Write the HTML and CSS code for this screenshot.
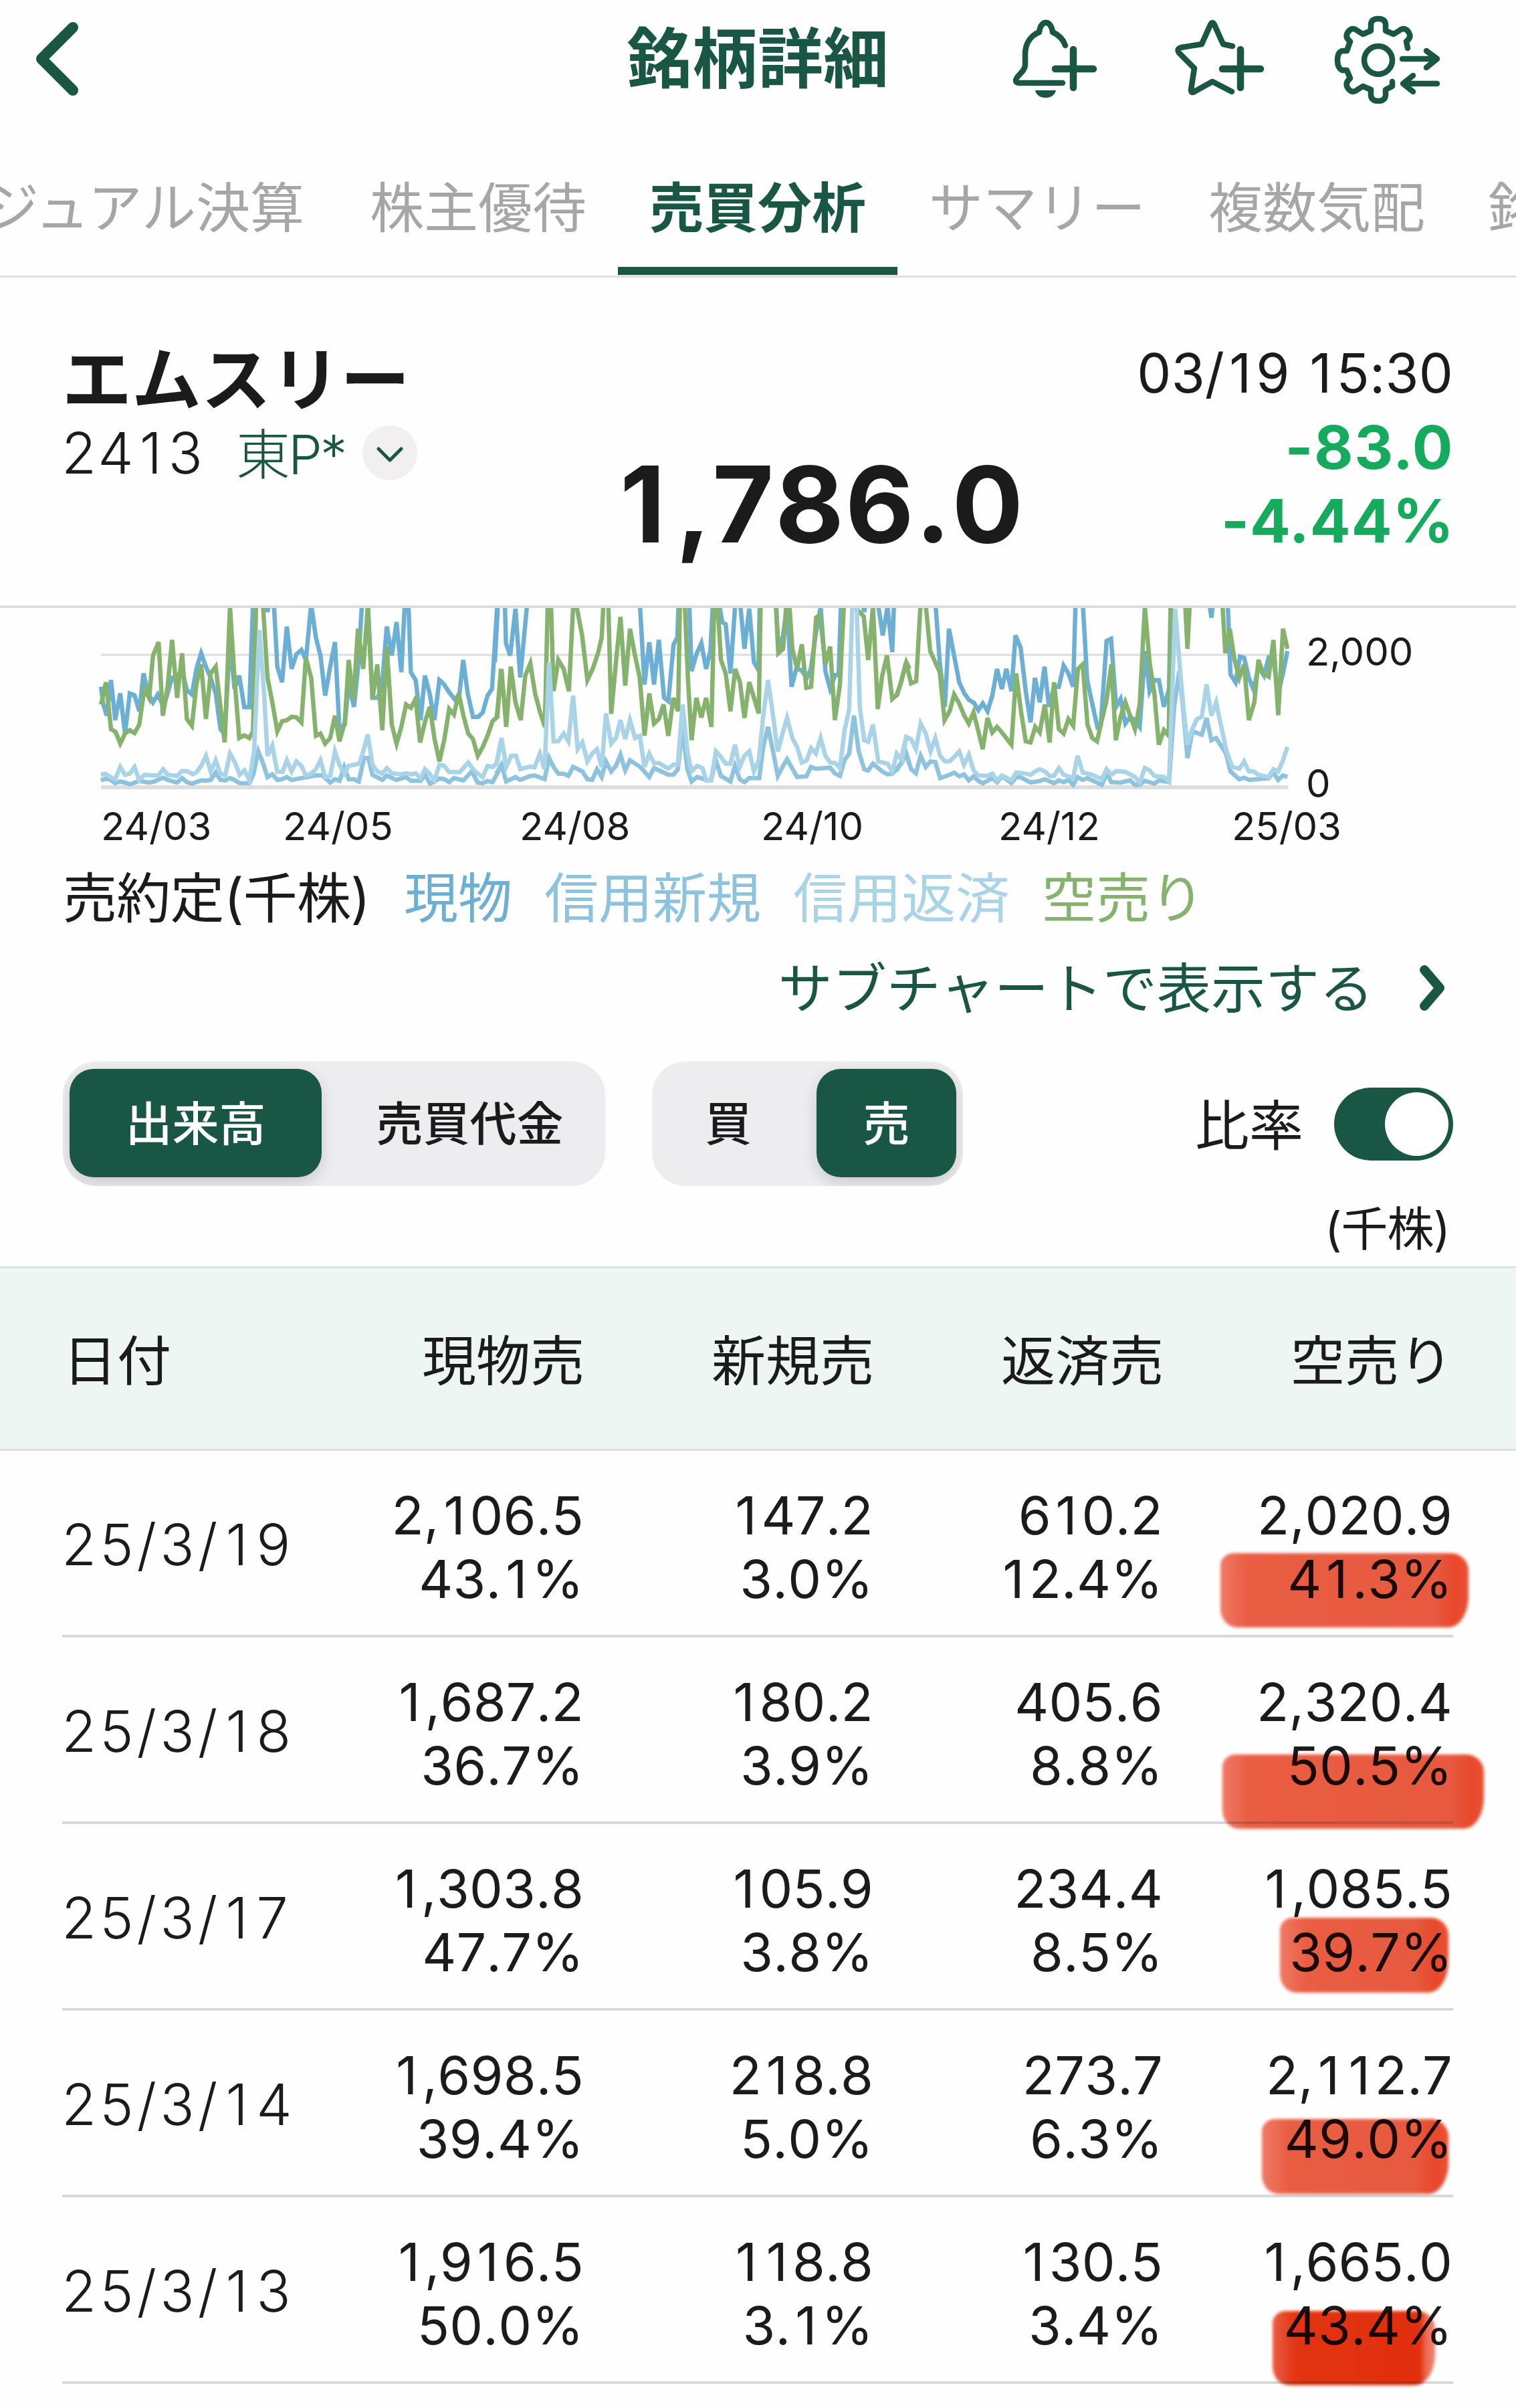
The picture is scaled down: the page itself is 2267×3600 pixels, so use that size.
FILE: index.html
```html
<!DOCTYPE html>
<html lang="ja">
<head>
  <meta charset="UTF-8">
  <meta name="viewport" content="width=device-width, initial-scale=1.0">
  <title>銘柄詳細</title>
  <link rel="stylesheet" href="styles.css">
</head>
<body>
  <header class="header">
    <svg class="header__back" viewBox="0 0 80 120"><path d="M66 13 L19 60 L66 107"/></svg>
    <h1 class="header__title">銘柄詳細</h1>
    <div class="header__actions">
      <svg class="icon icon--bell" viewBox="0 0 140 140">
        <path d="M84 53 C81 44 74 37 65 33 C63 14 47 14 45 33 C31 39 24 51 24 66 V82 C24 92 10 99 10 105 Q10 109 15 109 H80"/>
        <path class="icon__fill" d="M39 120 H70 C67 135 42 135 39 120 Z"/>
        <path class="icon__plus" d="M96 59 V116 M69 88 H126"/>
      </svg>
      <svg class="icon icon--star" viewBox="0 0 140 140">
        <path d="M87 54 L73 51 L60 22 Q57 16 54 22 L41 51 L10 56 Q3 58 7 64 L30 87 L25 119 Q25 125 30 122 L57 107 L86 122"/>
        <path class="icon__plus" d="M99 59 V116 M72 88 H129"/>
      </svg>
      <svg class="icon icon--gear" viewBox="0 0 170 140">
        <path d="M114 57 L112 47 Q120 41 116 34 Q110 24 101 31 L93 36 L81 31 V21 Q80 13 70 13 Q60 13 59 21 V31 L47 36 L39 31 Q30 24 24 34 Q20 41 28 47 L23 61 H16 Q9 63 9 75 Q9 87 16 90 H23 L28 102 Q20 109 24 116 Q30 126 39 119 L47 114 L59 119 V128 Q60 136 70 136 Q80 136 81 128 V119 L91 114 V107"/>
        <circle cx="70" cy="75" r="21"/>
        <path d="M106 73 H158 M142 61 L158 73 L142 86 M158 110 H108 M122 98 L107 110 L122 122"/>
      </svg>
    </div>
  </header>

  <nav class="tabs">
    <span class="tabs__item tabs__item--first">ビジュアル決算</span>
    <span class="tabs__item">株主優待</span>
    <span class="tabs__item tabs__item--active">売買分析</span>
    <span class="tabs__item">サマリー</span>
    <span class="tabs__item">複数気配</span>
    <span class="tabs__item">銘柄情報</span>
  </nav>

  <section class="quote">
    <div class="quote__stock">
      <h2 class="quote__name">エムスリー</h2>
      <div class="quote__code">
        <span class="quote__number num">2413</span>
        <span class="quote__market">東P*</span>
        <span class="quote__more"><svg viewBox="0 0 82 82"><path d="M24 35 L41 52 L58 35"/></svg></span>
      </div>
    </div>
    <p class="quote__price num">1,786.0</p>
    <div class="quote__change">
      <p class="quote__time num">03/19 15:30</p>
      <p class="quote__diff">-83.0</p>
      <p class="quote__diff quote__diff--rate">-4.44%</p>
    </div>
  </section>

  <svg class="chart" viewBox="0 0 2267 387">
    <path class="chart__grid" d="M151 70 H1926"/>
    <path class="chart__axis" d="M151 268 H1926"/>

    <!-- 現物 -->
    <g class="line line--spot">
      <polyline transform="translate(130 -19) scale(.3954 .3333)" points="53,410 62,490 75,540 91,380 107,560 126,440 144,620 162,440 180,448 198,520 214,350 232,440 250,480 268,445 290,500 322,370 341,370 358,330 378,425 397,445 414,330 432,260 450,320 468,370 487,440 505,600 521,625 541,200 558,420 576,360 595,502 614,502 628,40 668,-50 683,75 695,0 708,60 720,320 738,390 756,140 774,330 792,265 811,245 828,290 848,40 866,190 883,270 901,450 920,320 938,210 955,600 975,580 990,400 1010,500 1025,330 1040,40 1060,-20 1080,460 1098,460 1115,420 1134,140 1153,270 1171,120 1189,345 1202,40 1216,40 1225,345 1243,380 1262,560 1278,360 1296,440 1314,560 1333,380 1351,400 1370,435 1390,465 1408,450 1423,290 1440,440 1460,545 1480,545 1497,525 1515,450 1532,420 1552,40"/>
      <polyline transform="translate(740 -19) scale(.3954 .3333)" points="0,300 12,30 38,40 42,215 58,270 78,60 96,368 122,40 140,-60 540,-60 549,50 566,400 584,210 602,400 620,200 640,460 656,475 676,220 690,190 695,30 735,30 744,340 762,265 781,215 799,330 815,250 825,30 850,50 860,120 873,130 891,350 909,40 928,40 944,240 962,60 980,300 997,335 1003,-40 1060,-60 1072,240 1090,180 1105,50 1122,410 1140,330 1158,335 1180,370 1195,330 1213,180 1232,50 1250,340 1268,420 1287,358 1300,358 1310,0 1385,0 1397,75 1408,0 1448,30 1467,180 1485,50 1503,255 1510,20 1568,-60"/>
      <polyline transform="translate(1340 -19) scale(.5102 .3333)" points="20,-60 115,30 128,300 143,500 155,150 170,270 185,390 200,440 213,468 228,482 241,515 254,485 268,520 282,450 296,330 310,420 323,330 338,430 350,180 365,235 380,430 394,570 407,370 421,480 435,320 448,500 463,410 477,410 491,315 505,350 519,410 526,30 547,30 560,380 574,480 590,590 600,580 617,205 630,195 645,500 658,465 672,575 686,545 700,560 714,590 730,250 743,430 758,380 770,380 785,500 800,420 805,0 915,0 924,100 932,0 972,30 980,355 995,390 1008,275 1020,280 1034,370 1048,425 1062,320 1078,360 1092,280 1106,290 1120,440 1134,350 1147,250"/>
    </g>

    <!-- 空売り -->
    <g class="line line--short">
      <polyline transform="translate(130 -19) scale(.3954 .3333)" points="53,490 72,390 91,600 108,612 126,665 144,620 162,605 180,618 198,580 217,420 235,460 250,270 271,210 287,540 305,410 322,200 341,460 360,260 378,555 397,585 414,400 432,310 450,555 468,350 487,320 505,500 521,660 541,50 558,370 576,640 595,628 614,640 628,610 640,30 665,30 683,370 701,480 720,610 738,565 756,560 774,545 792,547 811,570 828,280 848,370 866,630 883,620 901,665 920,640 938,540 955,655 975,570 990,290 1008,470 1025,150 1045,330 1062,50 1080,465 1098,310 1117,605 1134,230 1153,580 1171,665 1189,590 1207,490 1225,505 1243,465 1260,660 1278,570 1297,500 1314,640 1333,745 1351,650 1370,510 1388,535 1406,440 1424,540 1442,620 1460,645 1478,720 1497,680 1515,630 1534,565 1552,545 1566,330"/>
      <polyline transform="translate(740 -19) scale(.3954 .3333)" points="7,550 25,330 43,590 60,320 78,480 98,560 115,360 134,305 152,440 170,520 189,590 200,30 212,30 222,430 240,290 260,330 280,430 296,50 310,55 330,180 350,380 370,330 390,260 404,190 411,30 429,30 440,532 458,300 475,97 493,405 511,150 530,270 548,370 566,630 584,440 602,575 620,555 638,490 656,630 675,460 693,520 700,30 718,30 730,370 744,650 762,460 781,548 799,460 819,590 830,30 842,30 855,290 873,350 891,520 909,330 927,390 944,550 962,390 980,460 998,530 1006,-20 1060,-20 1072,260 1090,240 1103,30 1113,30 1125,240 1143,330 1161,220 1178,415 1196,410 1215,100 1230,90 1250,310 1268,230 1286,560 1305,400 1322,0 1375,70 1395,95 1412,290 1430,50 1448,510 1465,360 1483,270 1503,465 1522,445 1540,370 1556,300 1568,330"/>
      <polyline transform="translate(1340 -19) scale(.5102 .3333)" points="0,455 15,390 29,300 44,395 59,385 72,30 86,30 100,250 128,345 142,560 157,520 170,445 185,485 200,540 213,575 227,525 241,610 254,690 268,550 282,615 296,590 310,615 338,670 352,350 366,520 380,655 394,660 408,590 421,615 436,490 450,660 463,390 477,600 491,620 505,555 519,585 533,330 547,310 561,580 575,640 589,655 603,560 617,470 631,310 644,650 658,545 672,480 686,540 700,600 714,490 729,50 743,300 757,440 770,670 785,605 799,630 806,0 846,0 854,240 862,0 955,0 965,260 978,150 992,290 1006,370 1020,310 1034,560 1050,480 1062,290 1076,350 1092,365 1106,200 1120,538 1134,150 1147,240"/>
    </g>

    <!-- 信用新規 -->
    <g class="line line--open">
      <polyline transform="translate(130 -19) scale(.3954 .3333)" points="53,830 72,822 90,828 107,843 126,835 144,840 162,848 198,833 235,840 255,835 288,818 305,828 341,840 360,820 378,838 397,845 414,838 432,830 450,832 468,828 487,795 505,828 523,830 541,820 558,828 576,842 614,843 630,800 648,700 665,750 683,815 701,803 720,828 738,825 756,815 774,828 848,812 866,808 890,808 920,840 938,825 955,832 973,770 990,825 1010,825 1028,835 1048,730 1064,730 1080,805 1117,828 1134,808 1170,828 1207,815 1225,832 1262,832 1278,805 1298,845 1333,822 1352,825 1370,838 1388,820 1424,830 1455,790 1478,840 1497,843 1515,833 1534,838 1552,800 1566,760"/>
      <polyline transform="translate(740 -19) scale(.3954 .3333)" points="5,800 25,760 43,835 78,815 96,828 130,812 150,808 188,825 205,730 222,770 240,800 260,800 278,810 296,770 331,790 350,825 368,828 386,780 404,815 420,745 440,790 458,765 475,715 493,785 511,740 550,770 584,815 602,775 656,805 675,805 692,780 710,600 728,780 744,835 765,815 800,828 818,828 836,740 855,810 891,835 908,765 926,825 944,838 962,820 1000,820 1015,680 1033,590 1052,700 1070,810 1088,770 1105,735 1143,815 1178,812 1196,770 1214,778 1268,773 1287,800 1305,810 1322,740 1340,710 1358,540 1376,700 1397,780 1412,785 1430,755 1465,790 1485,803 1503,800 1540,750 1555,710 1568,760"/>
      <polyline transform="translate(1340 -19) scale(.5102 .3333)" points="0,790 15,750 30,710 44,780 58,798 72,720 87,770 101,745 115,748 129,820 157,805 170,795 185,812 199,803 213,830 227,812 241,832 254,843 282,820 296,838 310,812 338,842 352,815 366,817 394,840 421,833 436,825 463,843 477,830 491,838 505,828 519,850 532,815 547,828 561,820 603,850 617,800 631,838 658,840 686,830 700,850 714,850 729,832 757,845 770,830 800,838 815,500 830,340 842,520 854,730 868,610 896,625 910,550 924,650 938,640 967,710 980,790 1006,825 1020,818 1034,828 1092,820 1106,795 1120,828 1134,808 1147,815"/>
    </g>

    <!-- 信用返済 -->
    <g class="line line--close">
      <polyline transform="translate(130 -19) scale(.3954 .3333)" points="53,805 70,800 88,815 107,825 126,770 144,805 162,800 180,770 198,830 217,805 250,808 270,808 288,780 305,805 341,810 360,788 380,790 400,802 414,795 432,765 450,720 468,790 487,740 505,800 523,808 541,710 560,750 578,805 596,785 614,830 632,700 652,155 670,440 683,720 701,675 720,792 740,792 756,740 774,790 792,745 811,765 828,808 848,800 866,780 883,740 901,815 920,810 938,700 955,760 973,800 990,765 1030,755 1045,700 1062,625 1080,760 1098,790 1117,800 1134,775 1153,798 1189,803 1207,798 1230,803 1243,798 1262,820 1278,780 1296,800 1314,830 1333,760 1351,765 1370,793 1410,793 1442,750 1460,780 1478,800 1497,815 1515,765 1534,770 1550,755 1566,660"/>
      <polyline transform="translate(740 -19) scale(.3954 .3333)" points="5,760 25,640 43,770 62,720 80,720 96,780 132,768 150,772 170,710 188,780 205,300 222,655 240,655 260,620 278,655 296,450 313,690 331,660 350,745 368,710 386,690 404,770 420,530 440,665 458,640 475,560 493,645 511,560 530,640 548,630 566,770 584,710 602,752 620,752 656,777 675,760 692,760 710,490 728,700 744,790 765,765 785,775 800,830 818,830 836,700 855,725 873,755 891,755 908,670 926,770 944,720 962,700 980,790 998,740 1015,540 1033,380 1052,540 1070,700 1088,620 1105,550 1125,640 1143,680 1161,750 1180,740 1196,685 1214,710 1232,640 1250,720 1268,750 1287,752 1305,775 1322,610 1340,510 1352,30 1368,30 1380,500 1397,650 1412,657 1430,580 1450,745 1485,755 1503,790 1520,710 1540,740 1555,640 1568,645"/>
      <polyline transform="translate(1340 -19) scale(.5102 .3333)" points="0,710 15,730 30,635 44,645 58,690 72,575 87,620 101,700 115,640 129,720 143,745 157,745 170,725 185,700 199,760 213,715 227,785 241,808 268,810 282,800 296,830 310,808 338,830 352,795 366,797 380,800 394,805 408,790 421,780 436,790 450,810 463,810 477,775 491,805 519,820 532,720 547,795 575,805 603,825 617,780 631,805 645,788 672,792 700,815 714,840 729,775 743,785 757,810 785,815 800,835 818,60 832,330 842,500 854,670 868,600 882,555 896,545 910,400 924,540 938,480 953,590 967,690 985,770 1006,778 1020,745 1034,790 1048,790 1062,805 1092,815 1106,780 1120,790 1134,740 1147,680"/>
    </g>

    <g class="chart__label">
      <text x="1953" y="86">2,000</text>
      <text x="1953" y="283">0</text>
      <text x="151" y="347">24/03</text>
      <text x="423" y="347">24/05</text>
      <text x="777" y="347">24/08</text>
      <text x="1138" y="347">24/10</text>
      <text x="1493" y="347">24/12</text>
      <text x="1842" y="347">25/03</text>
    </g>
  </svg>

  <div class="legend">
    <span class="legend__title">売約定(千株)</span>
    <span class="legend__spot">現物</span>
    <span class="legend__open">信用新規</span>
    <span class="legend__close">信用返済</span>
    <span class="legend__short">空売り</span>
  </div>

  <a class="subchart">
    <span class="subchart__text">サブチャートで表示する</span>
    <svg class="subchart__arrow" viewBox="0 0 50 80"><path d="M12 13 L35 40 L12 67"/></svg>
  </a>

  <div class="controls">
    <div class="segment segment--type">
      <span class="segment__item segment__item--active">出来高</span>
      <span class="segment__item">売買代金</span>
    </div>
    <div class="segment segment--side">
      <span class="segment__item">買</span>
      <span class="segment__item segment__item--active">売</span>
    </div>
    <span class="controls__label">比率</span>
    <span class="switch"><span class="switch__knob"></span></span>
  </div>
  <p class="unit">(千株)</p>

  <div class="table">
    <div class="table__head">
      <span>日付</span><span>現物売</span><span>新規売</span><span>返済売</span><span>空売り</span>
    </div>
    <div class="table__row">
      <span class="table__date num">25/3/19</span>
      <span class="num">2,106.5<br>43.1%</span>
      <span class="num">147.2<br>3.0%</span>
      <span class="num">610.2<br>12.4%</span>
      <span class="num">2,020.9<br>41.3%</span>
      <i class="marker marker--1"></i>
    </div>
    <div class="table__row">
      <span class="table__date num">25/3/18</span>
      <span class="num">1,687.2<br>36.7%</span>
      <span class="num">180.2<br>3.9%</span>
      <span class="num">405.6<br>8.8%</span>
      <span class="num">2,320.4<br>50.5%</span>
      <i class="marker marker--2"></i>
    </div>
    <div class="table__row">
      <span class="table__date num">25/3/17</span>
      <span class="num">1,303.8<br>47.7%</span>
      <span class="num">105.9<br>3.8%</span>
      <span class="num">234.4<br>8.5%</span>
      <span class="num">1,085.5<br>39.7%</span>
      <i class="marker marker--3"></i>
    </div>
    <div class="table__row">
      <span class="table__date num">25/3/14</span>
      <span class="num">1,698.5<br>39.4%</span>
      <span class="num">218.8<br>5.0%</span>
      <span class="num">273.7<br>6.3%</span>
      <span class="num">2,112.7<br>49.0%</span>
      <i class="marker marker--4"></i>
    </div>
    <div class="table__row">
      <span class="table__date num">25/3/13</span>
      <span class="num">1,916.5<br>50.0%</span>
      <span class="num">118.8<br>3.1%</span>
      <span class="num">130.5<br>3.4%</span>
      <span class="num">1,665.0<br>43.4%</span>
      <i class="marker marker--5"></i>
    </div>
  </div>

  <script>
    // Give the narrow "1" the same advance as the other digits
    document.querySelectorAll('.num').forEach((element) => {
      element.innerHTML = element.innerHTML.replace(/1/g, '<span class="num__one">1</span>');
    });
  </script>
</body>
</html>
```
FILE: styles.css
```css
* {
  box-sizing: border-box;
}

body {
  margin: 0;
  width: 2267px;
  height: 3600px;
  overflow: hidden;
  background-color: #fefefe;
  color: #1b1b1b;
  font-family: Inter, "Noto Sans CJK JP", sans-serif;
  font-size: 81px;
}

h1, h2, p {
  margin: 0;
}

svg {
  display: block;
  fill: none;
  stroke: #195644;
  stroke-linecap: round;
  stroke-linejoin: round;
}

.num {
  font-kerning: none;
}

.num__one {
  margin: 0 0.085em;
}

/* Header */
.header {
  display: grid;
  grid-template-columns: 933px 400px 1fr;
  align-items: center;
  height: 176px;
}

.header__back {
  width: 80px;
  height: 120px;
  margin-left: 43px;
  stroke-width: 16;
}

.header__title {
  color: #195644;
  font-size: 98px;
  line-height: 120px;
  text-align: center;
}

.header__actions {
  display: flex;
  padding-left: 176px;
}

.icon {
  height: 140px;
  margin-bottom: 6px;
  stroke-width: 8.5;
}

.icon--bell {
  width: 140px;
}

.icon--star {
  width: 140px;
  margin-left: 107px;
}

.icon--gear {
  width: 170px;
  margin-left: 95px;
}

.icon__plus {
  stroke-width: 10.5;
}

.icon__fill {
  fill: #195644;
  stroke: none;
}

/* Tabs */
.tabs {
  display: flex;
  height: 239px;
  overflow: hidden;
  border-bottom: 3px solid #e0e0e0;
}

.tabs__item {
  flex: none;
  width: 418px;
  height: 235px;
  padding-top: 47px;
  color: #a6a6a6;
  line-height: 176px;
  text-align: center;
  white-space: nowrap;
}

.tabs__item--first {
  width: 661px;
  margin-left: -155px;
}

.tabs__item--active {
  border-bottom: 12px solid #195644;
  color: #195644;
  font-weight: bold;
}

/* Quote */
.quote {
  display: grid;
  grid-template-columns: 800px 635px 1fr;
  height: 494px;
  padding: 87px 94px 0 95px;
  border-bottom: 4px solid #dedede;
}

.quote__stock {
  padding-top: 11px;
}

.quote__name {
  margin-left: -2px;
  font-size: 104px;
  line-height: 110px;
}

.quote__code {
  display: flex;
  align-items: center;
  height: 108px;
}

.quote__number {
  width: 261px;
  margin-left: -3px;
  font-size: 85px;
  font-weight: 300;
  letter-spacing: 2px;
}

.quote__market {
  width: 189px;
  padding-bottom: 8px;
  color: #195644;
  font-weight: 300;
  letter-spacing: -3px;
}

.quote__more {
  width: 82px;
  height: 82px;
  border-radius: 50%;
  background-color: #f1eff0;
}

.quote__more svg {
  stroke-width: 5;
}

.quote__price {
  margin-right: -2px;
  padding-top: 172px;
  font-size: 158px;
  font-weight: bold;
  line-height: 160px;
  letter-spacing: 2px;
  text-align: right;
}

.quote__change {
  text-align: right;
}

.quote__time {
  line-height: 112px;
  letter-spacing: 0.2px;
}

.quote__diff {
  margin-right: -1px;
  color: #14ab5c;
  font-size: 90px;
  font-weight: bold;
  line-height: 110px;
  letter-spacing: 1.5px;
}

.quote__diff--rate {
  margin-right: -2px;
  letter-spacing: 1px;
}

/* Chart */
.chart {
  width: 2267px;
  height: 387px;
}

.chart__grid {
  stroke: #dedede;
  stroke-width: 3;
  stroke-linecap: butt;
}

.chart__axis {
  stroke: #dedede;
  stroke-width: 6;
  stroke-linecap: butt;
}

.line polyline {
  stroke-width: 6.5;
  stroke-linecap: butt;
  stroke-linejoin: miter;
  vector-effect: non-scaling-stroke;
}

.line--spot {
  stroke: #6bb0d4;
}

.line--short {
  stroke: #85b26c;
}

.line--open {
  stroke: #8dc3de;
}

.line--close {
  stroke: #a9d4e8;
}

.chart__label {
  fill: #1b1b1b;
  stroke: none;
  font-size: 58px;
}

/* Legend and link */
.legend {
  display: flex;
  gap: 48px;
  padding-left: 94px;
  line-height: 94px;
}

.legend__title {
  width: 462px;
  letter-spacing: -0.7px;
  white-space: nowrap;
}

.legend__spot {
  color: #6bb0d4;
}

.legend__open {
  color: #8dc3de;
}

.legend__close {
  color: #a9d4e8;
}

.legend__short {
  color: #85b26c;
}

.subchart {
  display: flex;
  align-items: center;
  justify-content: flex-end;
  gap: 64px;
  height: 90px;
  margin-top: 42px;
  padding-right: 99px;
  color: #195644;
}

.subchart__text {
  padding-bottom: 11px;
}

.subchart__arrow {
  width: 50px;
  height: 80px;
  stroke-width: 14;
}

/* Controls */
.controls {
  display: flex;
  align-items: center;
  height: 186px;
  margin: 65px 94px 0 94px;
}

.segment {
  display: flex;
  height: 186px;
  padding: 11px 10px 13px;
  overflow: hidden;
  border-radius: 50px;
  background-color: #ededef;
  font-size: 70px;
  font-weight: 500;
  line-height: 166px;
  text-align: center;
}

.segment--type {
  width: 811px;
}

.segment--side {
  width: 465px;
  margin-left: 70px;
}

.segment__item {
  flex: 1;
}

.segment--type .segment__item:last-child {
  padding-left: 29px;
}

.segment--side .segment__item:first-child {
  padding-right: 28px;
}

.segment__item--active {
  border-radius: 36px;
  background-color: #195644;
  box-shadow: 0 8px 22px rgba(0, 0, 0, 0.15);
  color: #ffffff;
}

.segment--type .segment__item--active {
  flex: none;
  width: 377px;
}

.segment--side .segment__item--active {
  flex: none;
  width: 209px;
}

.controls__label {
  margin-left: auto;
  padding-bottom: 7px;
}

.switch {
  display: flex;
  align-items: center;
  justify-content: flex-end;
  width: 178px;
  height: 109px;
  margin-left: 46px;
  padding-right: 7px;
  border-radius: 55px;
  background-color: #195644;
}

.switch__knob {
  width: 95px;
  height: 95px;
  border-radius: 50%;
  background-color: #ffffff;
}

.unit {
  height: 120px;
  padding-right: 99px;
  font-size: 70px;
  line-height: 130px;
  letter-spacing: -1px;
  text-align: right;
}

/* Table */
.table__head,
.table__row {
  display: grid;
  grid-template-columns: 347px repeat(4, 433px);
  align-items: center;
  text-align: right;
}

.table__head {
  height: 276px;
  padding: 0 0 5px 94px;
  border-top: 3px solid #dbe2df;
  border-bottom: 3px solid #dbe2df;
  background-color: #eef6f3;
}

.table__head :first-child,
.table__date {
  text-align: left;
}

.table__row {
  position: relative;
  height: 279px;
  margin: 0 94px 0 93px;
  padding-top: 13px;
  border-bottom: 4px solid #d9d9db;
  font-size: 79px;
  line-height: 95px;
  letter-spacing: 0.2px;
}

.table__row .table__date {
  margin-left: -1px;
  padding-bottom: 8px;
  font-size: 85px;
  font-weight: 300;
  letter-spacing: 5px;
}

/* Hand-drawn highlighter over the short-selling ratio */
.marker {
  position: absolute;
  border-radius: 20px 26px 30px 24px / 18px 26px 46px 28px;
  background: linear-gradient(90deg, #f07a65 0, #ea5d43 40px, #e85a40 calc(100% - 50px), #e9482b calc(100% - 20px), #ea5135 100%);
  filter: blur(2px);
  mix-blend-mode: multiply;
}

.marker--1 {
  left: 1732px;
  top: 153px;
  width: 371px;
  height: 111px;
}

.marker--2 {
  left: 1735px;
  top: 175px;
  width: 391px;
  height: 111px;
}

.marker--3 {
  left: 1821px;
  top: 140px;
  width: 252px;
  height: 112px;
}

.marker--4 {
  left: 1794px;
  top: 162px;
  width: 279px;
  height: 112px;
}

.marker--5 {
  left: 1810px;
  top: 170px;
  width: 243px;
  height: 111px;
  background: linear-gradient(90deg, #ea5e42 0, #e33412 34px, #e32f0e calc(100% - 22px), #ec6a50 calc(100% - 14px), #f08570 100%);
}
```
